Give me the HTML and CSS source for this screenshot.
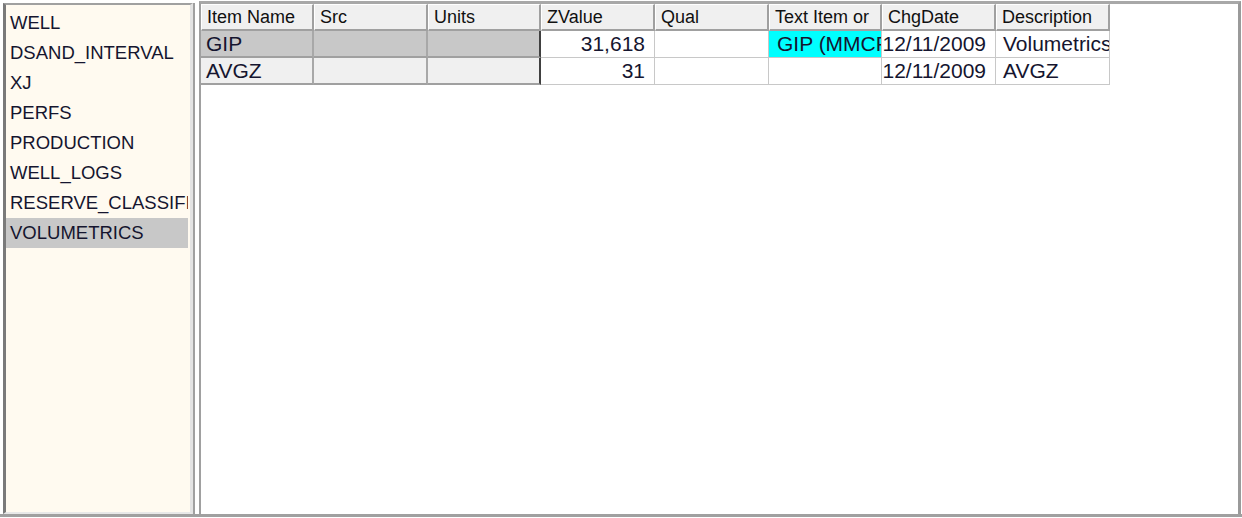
FILE: index.html
```html
<!DOCTYPE html>
<html>
<head>
<meta charset="utf-8">
<link rel="stylesheet" href="styles.css">
</head>
<body>
<div class="app">
  <div class="list">
    <div class="item">WELL</div>
    <div class="item">DSAND_INTERVAL</div>
    <div class="item">XJ</div>
    <div class="item">PERFS</div>
    <div class="item">PRODUCTION</div>
    <div class="item">WELL_LOGS</div>
    <div class="item">RESERVE_CLASSIFICATION</div>
    <div class="item selected">VOLUMETRICS</div>
  </div>
  <div class="splitter"></div>
  <div class="grid">
    <div class="table">
      <div class="hd">Item Name</div>
      <div class="hd">Src</div>
      <div class="hd">Units</div>
      <div class="hd">ZValue</div>
      <div class="hd">Qual</div>
      <div class="hd">Text Item or</div>
      <div class="hd">ChgDate</div>
      <div class="hd">Description</div>

      <div class="cell sel">GIP</div>
      <div class="cell sel"></div>
      <div class="cell sel frz"></div>
      <div class="cell num">31,618</div>
      <div class="cell"></div>
      <div class="cell cyan">GIP (MMCF)</div>
      <div class="cell num">12/11/2009</div>
      <div class="cell desc">Volumetrics</div>

      <div class="cell fixed">AVGZ</div>
      <div class="cell fixed"></div>
      <div class="cell fixed frz"></div>
      <div class="cell num">31</div>
      <div class="cell"></div>
      <div class="cell"></div>
      <div class="cell num">12/11/2009</div>
      <div class="cell desc">AVGZ</div>
    </div>
  </div>
</div>
</body>
</html>
```

FILE: styles.css
```css
html, body {
  margin: 0;
  padding: 0;
  background: #ffffff;
}

body {
  font-family: "Liberation Sans", Arial, sans-serif;
  width: 1242px;
  height: 518px;
  overflow: hidden;
}

.app {
  display: flex;
  height: 517px;
  border-bottom: 3px solid #a0a0a0;
  box-sizing: border-box;
}

.list {
  margin: 3px 0 0 3px;
  width: 190px;
  box-sizing: border-box;
  background: #fffaf0;
  border-left: 3px solid #7a7a7a;
  border-top: 2px solid #a0a0a0;
  border-right: 3px solid #e3e3e3;
  border-bottom: 2px solid #e8e8e8;
  padding-top: 3px;
  padding-right: 2px;
  overflow: hidden;
}

.item {
  height: 30px;
  line-height: 30px;
  font-size: 18.5px;
  color: #15152f;
  padding-left: 4px;
  white-space: nowrap;
  overflow: hidden;
}

.item.selected {
  background: #c8c8c8;
}

.splitter {
  width: 2px;
  margin: 3px 2px 0 0;
  border-left: 2px solid #a0a0a0;
}

.grid {
  flex: 1;
  margin: 1px 1px 0 0;
  background: #ffffff;
  border-top: 3px solid #a8a8a8;
  border-left: 2px solid #a0a0a0;
  border-right: 3px solid #9a9a9a;
  box-sizing: border-box;
}

.table {
  display: grid;
  grid-template-columns: 113px 114px 113px 114px 114px 113px 114px 114px;
  grid-auto-rows: 27px;
  width: max-content;
}

.hd {
  box-sizing: border-box;
  background: #f0f0f0;
  border-top: 1px solid #ffffff;
  border-left: 1px solid #ffffff;
  border-right: 2px solid #a0a0a0;
  border-bottom: 2px solid #a0a0a0;
  font-size: 18px;
  line-height: 24px;
  padding-left: 5px;
  color: #111111;
  white-space: nowrap;
  overflow: hidden;
}

.cell {
  box-sizing: border-box;
  border-right: 1px solid #c8c8c8;
  border-bottom: 1px solid #c8c8c8;
  font-size: 21px;
  line-height: 26px;
  padding: 0 8px 0 5px;
  color: #15152f;
  white-space: nowrap;
  overflow: hidden;
}

.cell.num {
  text-align: right;
  padding-right: 9px;
  padding-left: 0;
  overflow: visible;
  direction: rtl;
}

.cell.desc {
  padding-left: 7px;
  padding-right: 0;
}

.cell.sel {
  background: #c8c8c8;
  border-right: 2px solid #a8a8a8;
  border-bottom: 2px solid #a0a0a0;
}

.cell.fixed {
  background: #f0f0f0;
  border-right: 2px solid #a8a8a8;
  border-bottom: 2px solid #a0a0a0;
}

.cell.frz {
  border-right: 2px solid #404040;
}

.cell.cyan {
  background: #00ffff;
  padding-left: 8px;
  padding-right: 0;
}
```
